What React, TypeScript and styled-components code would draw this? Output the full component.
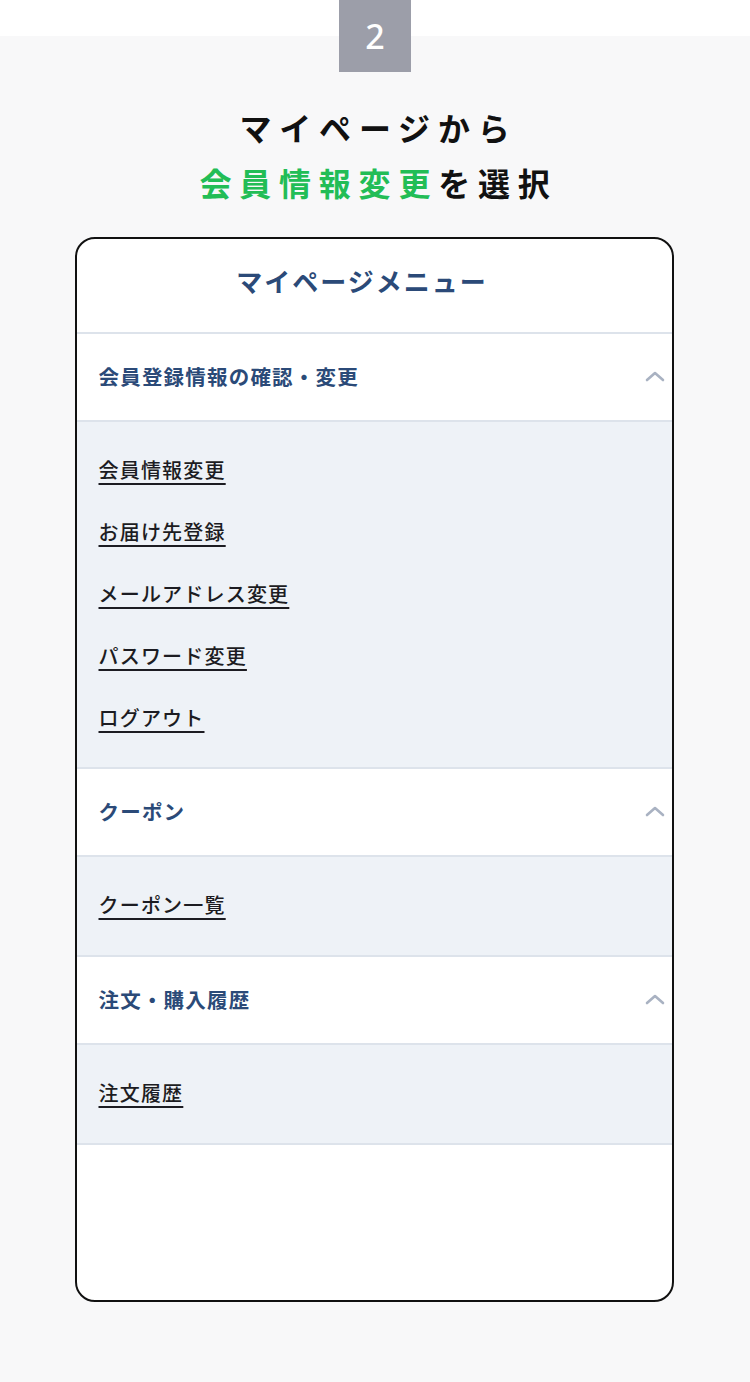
import React from "react";
import styled, { createGlobalStyle } from "styled-components";

const Global = createGlobalStyle`
  html, body { margin: 0; padding: 0; }
  body {
    background: #ffffff;
    font-family: "Noto Sans CJK JP", "Noto Sans", sans-serif;
  }
`;

const Page = styled.div`
  width: 750px;
  height: 1382px;
  display: flex;
  flex-direction: column;
  align-items: center;
  background: linear-gradient(#ffffff 0, #ffffff 36px, #f8f8f9 36px);
`;

const Badge = styled.div`
  width: 72px;
  height: 72px;
  background: #9c9ea9;
  color: #ffffff;
  font-family: "Noto Sans", sans-serif;
  font-size: 34px;
  font-weight: 500;
  display: flex;
  align-items: center;
  justify-content: center;
`;

const Title = styled.h1`
  margin: 28px 0 0;
  text-align: center;
  font-size: 32px;
  font-weight: 700;
  line-height: 55px;
  letter-spacing: 7.8px;
  color: #111111;
  padding-left: 7px;
`;

const Green = styled.span`
  color: #22bd56;
`;

const Card = styled.div`
  margin-top: 27px;
  margin-right: 2px;
  width: 599px;
  height: 1065px;
  box-sizing: border-box;
  border: 2px solid #111111;
  border-radius: 20px;
  background: #ffffff;
  overflow: hidden;
  display: flex;
  flex-direction: column;
`;

const CardHeader = styled.div`
  height: 95px;
  display: flex;
  align-items: center;
  justify-content: center;
  padding: 0 24px 10px 0;
  font-size: 26px;
  font-weight: 700;
  letter-spacing: 2px;
  color: #2b4a78;
  border-bottom: 2px solid #dde3eb;
  box-sizing: border-box;
`;

const SectionHead = styled.div`
  height: 88px;
  box-sizing: border-box;
  display: flex;
  align-items: center;
  justify-content: space-between;
  padding: 0 6px 3px 22px;
  border-bottom: 2px solid #dde3eb;
  font-size: 20.5px;
  font-weight: 700;
  letter-spacing: 1.2px;
  color: #2b4a78;
`;

const Chevron = styled.svg`
  width: 22px;
  height: 14px;
`;

const List = styled.ul<{ $single?: boolean }>`
  margin: 0;
  padding: ${(p) => (p.$single ? "31px 22px 31px" : "31px 22px 30px")};
  list-style: none;
  background: #eef2f7;
  border-bottom: 2px solid #dde3eb;
  display: flex;
  flex-direction: column;
  gap: 26px;
`;

const Item = styled.li`
  height: 36px;
  box-sizing: border-box;
  padding-bottom: 3px;
  display: flex;
  align-items: center;
`;

const ItemLink = styled.a`
  font-size: 20px;
  font-weight: 500;
  letter-spacing: 1.2px;
  color: #1c1c22;
  text-decoration: underline;
  text-underline-offset: 5px;
  text-decoration-thickness: 2px;
`;

const ChevronUp = () => (
  <Chevron viewBox="0 0 22 14">
    <path d="M3 11 L11 4 L19 11" fill="none" stroke="#a9b2c2" strokeWidth="2.6" strokeLinecap="round" strokeLinejoin="round" />
  </Chevron>
);

const sections = [
  { title: "会員登録情報の確認・変更", items: ["会員情報変更", "お届け先登録", "メールアドレス変更", "パスワード変更", "ログアウト"] },
  { title: "クーポン", items: ["クーポン一覧"] },
  { title: "注文・購入履歴", items: ["注文履歴"] },
];

export default function App() {
  return (
    <Page>
      <Global />
      <Badge>2</Badge>
      <Title>
        マイページから
        <br />
        <Green>会員情報変更</Green>を選択
      </Title>
      <Card>
        <CardHeader>マイページメニュー</CardHeader>
        {sections.map((s) => (
          <React.Fragment key={s.title}>
            <SectionHead>
              <span>{s.title}</span>
              <ChevronUp />
            </SectionHead>
            <List $single={s.items.length === 1}>
              {s.items.map((i) => (
                <Item key={i}>
                  <ItemLink href="#">{i}</ItemLink>
                </Item>
              ))}
            </List>
          </React.Fragment>
        ))}
      </Card>
    </Page>
  );
}
